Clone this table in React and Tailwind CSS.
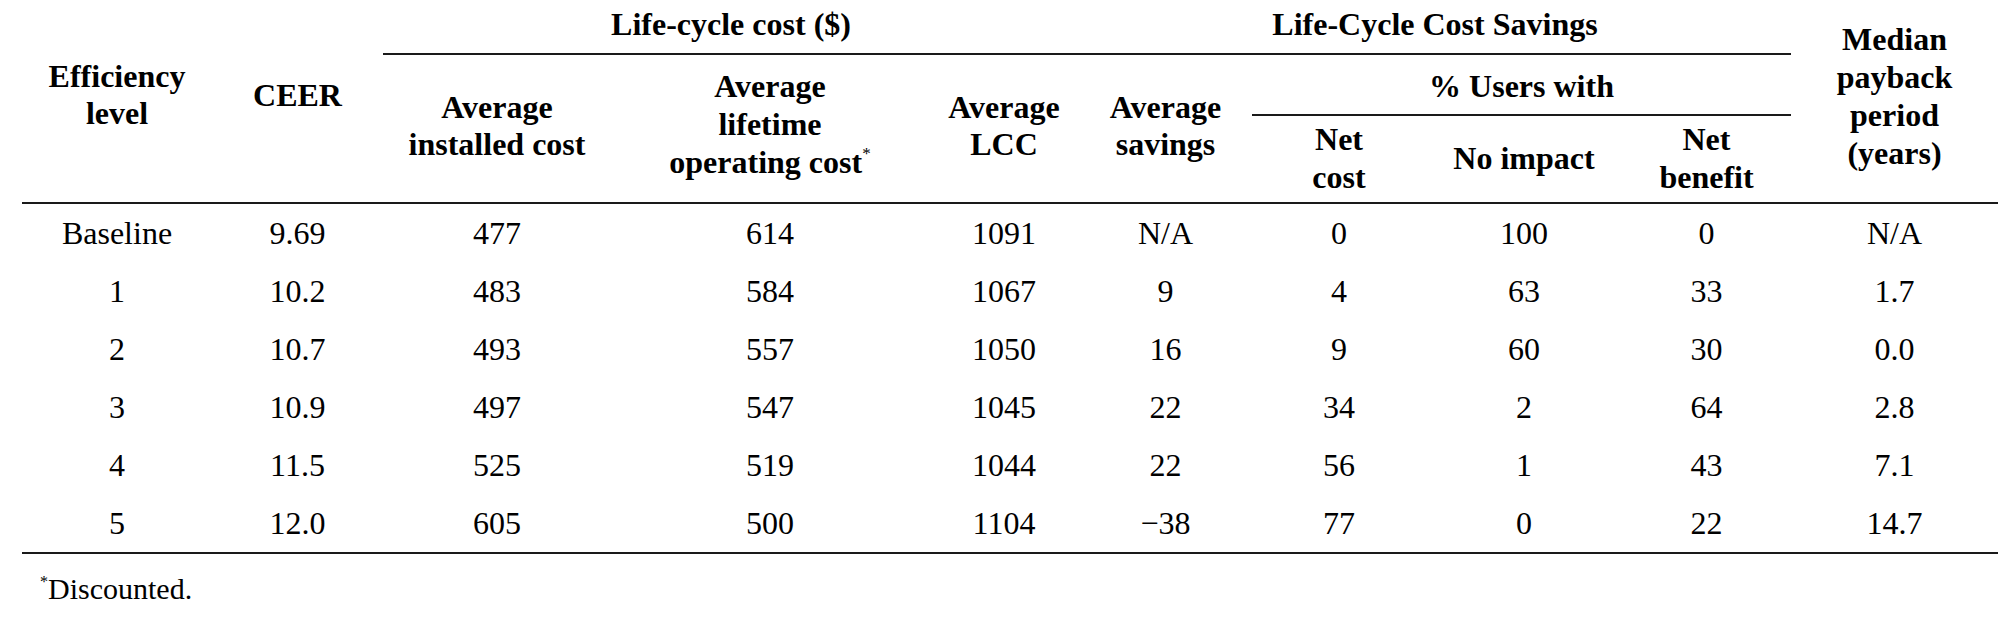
import React from 'react';

const cols =
  'grid grid-cols-[190px_171px_228px_318px_150px_173px_174px_196px_169px_207px]';

const rows = [
  ['Baseline', '9.69', '477', '614', '1091', 'N/A', '0', '100', '0', 'N/A'],
  ['1', '10.2', '483', '584', '1067', '9', '4', '63', '33', '1.7'],
  ['2', '10.7', '493', '557', '1050', '16', '9', '60', '30', '0.0'],
  ['3', '10.9', '497', '547', '1045', '22', '34', '2', '64', '2.8'],
  ['4', '11.5', '525', '519', '1044', '22', '56', '1', '43', '7.1'],
  ['5', '12.0', '605', '500', '1104', '\u221238', '77', '0', '22', '14.7'],
];

const Head = ({ className = '', children }) => (
  <div className={`flex items-center justify-center text-center border-[#1a1a1a] ${className}`}>
    <div>{children}</div>
  </div>
);

export default function App() {
  return (
    <div className="w-[2002px] h-[636px] overflow-hidden bg-white text-black font-serif">
      <div className="ml-[22px] w-[1976px] font-[family-name:Liberation_Serif,Times_New_Roman,serif]">
        {/* header */}
        <div className={`${cols} grid-rows-[55px_61px_88px] text-[32px] leading-[37px] font-bold`}>
          <Head className="col-start-1 row-start-1 row-span-3 border-b-2 pb-[12px]">
            Efficiency
            <br />
            level
          </Head>
          <Head className="col-start-2 row-start-1 row-span-3 border-b-2 pb-[12px]">CEER</Head>
          <Head className="col-start-3 col-span-3 row-start-1 border-b-2 pb-[4px]">Life-cycle cost ($)</Head>
          <Head className="col-start-6 col-span-4 row-start-1 border-b-2 pb-[4px]">Life-Cycle Cost Savings</Head>
          <Head className="col-start-10 row-start-1 row-span-3 border-b-2 pb-[10px] leading-[38px]">
            Median
            <br />
            payback
            <br />
            period
            <br />
            (years)
          </Head>
          <Head className="col-start-3 row-start-2 row-span-2 border-b-2 pb-[6px]">
            Average
            <br />
            installed cost
          </Head>
          <Head className="col-start-4 row-start-2 row-span-2 border-b-2 pb-[9px] leading-[38px]">
            Average
            <br />
            lifetime
            <br />
            operating cost<sup className="text-[17px] font-normal -top-[14px]">*</sup>
          </Head>
          <Head className="col-start-5 row-start-2 row-span-2 border-b-2 pb-[6px]">
            Average
            <br />
            LCC
          </Head>
          <Head className="col-start-6 row-start-2 row-span-2 border-b-2 pb-[6px]">
            Average
            <br />
            savings
          </Head>
          <Head className="col-start-7 col-span-3 row-start-2 border-b-2 pt-[3px]">% Users with</Head>
          <Head className="col-start-7 row-start-3 border-b-2 pb-[2px] leading-[38px]">
            Net
            <br />
            cost
          </Head>
          <Head className="col-start-8 row-start-3 border-b-2 pb-[2px]">No impact</Head>
          <Head className="col-start-9 row-start-3 border-b-2 pb-[2px] leading-[38px]">
            Net
            <br />
            benefit
          </Head>
        </div>

        {/* body */}
        <div className="border-b-2 border-[#1a1a1a] text-[32px] leading-[37px]">
          {rows.map((row) => (
            <div key={row[0]} className={`${cols} h-[58px]`}>
              {row.map((cell, i) => (
                <div key={i} className="flex items-center justify-center">
                  {cell}
                </div>
              ))}
            </div>
          ))}
        </div>

        <div className="mt-[16px] pl-[18px] text-[30px] leading-[37px]">
          <sup className="text-[16px] -top-[12px]">*</sup>Discounted.
        </div>
      </div>
    </div>
  );
}
